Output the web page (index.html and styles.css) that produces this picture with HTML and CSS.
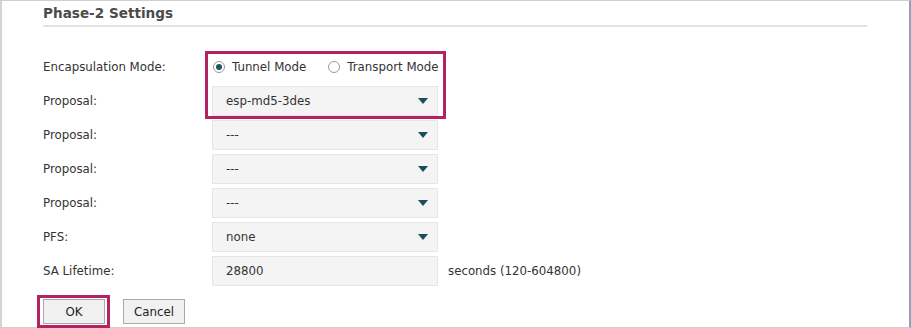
FILE: index.html
```html
<!DOCTYPE html>
<html lang="en">
<head>
  <meta charset="UTF-8" />
  <title>Phase-2 Settings</title>
  <link rel="stylesheet" href="styles.css">
</head>
<body>
  <div class="panel">
    <h2 class="title">Phase-2 Settings</h2>

    <div class="form">
      <div class="row">
        <label>Encapsulation Mode:</label>
        <div class="field radios">
          <span class="radio checked"></span><span class="radio-text">Tunnel Mode</span>
          <span class="radio"></span><span class="radio-text">Transport Mode</span>
        </div>
      </div>
      <div class="row">
        <label>Proposal:</label>
        <div class="select"><span>esp-md5-3des</span><i class="arrow"></i></div>
      </div>
      <div class="row">
        <label>Proposal:</label>
        <div class="select"><span>---</span><i class="arrow"></i></div>
      </div>
      <div class="row">
        <label>Proposal:</label>
        <div class="select"><span>---</span><i class="arrow"></i></div>
      </div>
      <div class="row">
        <label>Proposal:</label>
        <div class="select"><span>---</span><i class="arrow"></i></div>
      </div>
      <div class="row">
        <label>PFS:</label>
        <div class="select"><span>none</span><i class="arrow"></i></div>
      </div>
      <div class="row">
        <label>SA Lifetime:</label>
        <input class="text" type="text" value="28800" />
        <span class="hint">seconds (120-604800)</span>
      </div>
    </div>

    <div class="buttons">
      <button class="btn">OK</button>
      <button class="btn">Cancel</button>
    </div>

    <!-- annotation boxes -->
    <div class="mark mark-mode"></div>
    <div class="mark mark-ok"></div>
  </div>
</body>
</html>
```

FILE: styles.css
```css
html, body {
  margin: 0;
  padding: 0;
  background: #fff;
}
body {
  font-family: "DejaVu Sans", Verdana, sans-serif;
  font-size: 11.8px;
  color: #333;
}
.panel {
  position: relative;
  box-sizing: border-box;
  width: 911px;
  height: 328px;
  border-top: 1px solid #cfcfcf;
  border-left: 2px solid #d4d4d4;
  border-right: 2px solid #8fa1b6;
  border-bottom: 1px solid #cfcfcf;
  padding: 0 42px 0 41px;
}
.title {
  margin: 0;
  padding-top: 4px;
  height: 20px;
  font-size: 13.6px;
  font-weight: bold;
  color: #4b4b4b;
  border-bottom: 2px solid #e2e2e2;
}
.form {
  margin-top: 23px;
}
.row {
  display: flex;
  align-items: center;
  height: 34px;
}
.row label {
  width: 169px;
}
.radios {
  display: flex;
  align-items: center;
}
.radio {
  box-sizing: border-box;
  width: 12px;
  height: 12px;
  border: 1px solid #9a9a9a;
  border-radius: 50%;
  margin-left: 1px;
  position: relative;
}
.radio.checked::after {
  content: "";
  position: absolute;
  left: 2px;
  top: 2px;
  width: 6px;
  height: 6px;
  border-radius: 50%;
  background: #1b5560;
}
.radio-text {
  margin-left: 7px;
  margin-right: 21px;
}
.select, .text {
  box-sizing: border-box;
  width: 226px;
  height: 30px;
  background: #f4f4f4;
  border: 1px solid #e6e6e6;
}
.select {
  display: flex;
  align-items: center;
  justify-content: space-between;
  padding: 0 9px 0 13px;
}
.arrow {
  width: 0;
  height: 0;
  border-left: 5px solid transparent;
  border-right: 5px solid transparent;
  border-top: 6px solid #13505b;
}
.text {
  font: inherit;
  color: #333;
  padding: 0 13px;
  outline: none;
}
.hint {
  margin-left: 10px;
}
.buttons {
  display: flex;
  gap: 18px;
  margin-top: 11px;
}
.btn {
  box-sizing: border-box;
  width: 62px;
  height: 25px;
  font: inherit;
  color: #222;
  background: #f1f1f1;
  border: 1px solid #a8a8a8;
  border-radius: 0;
  padding: 0;
}
.mark {
  position: absolute;
  box-sizing: border-box;
  border: 3px solid #b42361;
}
.mark-mode {
  left: 203px;
  top: 50px;
  width: 241px;
  height: 68px;
}
.mark-ok {
  left: 35px;
  top: 294px;
  width: 73px;
  height: 33px;
}
```
